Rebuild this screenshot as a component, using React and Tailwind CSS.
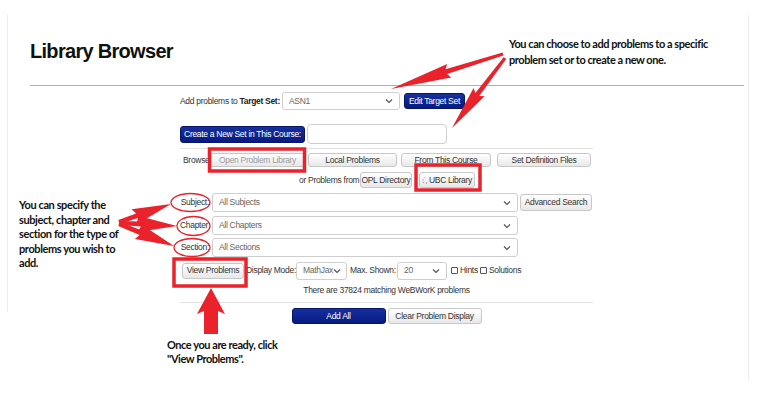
import React from 'react';

const RED = '#e9222b';

// polygon for a tapered annotation arrow, tail -> tip
function arrowPoints(x0, y0, x1, y1, headLen, headW, tailW, neckW) {
  const dx = x1 - x0;
  const dy = y1 - y0;
  const len = Math.hypot(dx, dy);
  const ux = dx / len;
  const uy = dy / len;
  const px = -uy;
  const py = ux;
  const bx = x1 - ux * headLen;
  const by = y1 - uy * headLen;
  const pts = [
    [x0 + px * tailW, y0 + py * tailW],
    [bx + px * neckW, by + py * neckW],
    [bx - ux * 3 + px * headW, by - uy * 3 + py * headW],
    [x1, y1],
    [bx - ux * 3 - px * headW, by - uy * 3 - py * headW],
    [bx - px * neckW, by - py * neckW],
    [x0 - px * tailW, y0 - py * tailW],
  ];
  return pts.map((p) => p.map((v) => v.toFixed(1)).join(',')).join(' ');
}

const arrows = [
  { from: [503, 54], to: [391, 89], head: 58, w: 7, tail: 1.5, neck: 2.5 },
  { from: [505, 58], to: [452, 128], head: 42, w: 7, tail: 1.5, neck: 2.5 },
  { from: [119, 222], to: [171, 204], head: 36, w: 8, tail: 2, neck: 2.5 },
  { from: [119, 223], to: [177, 226], head: 36, w: 8, tail: 2, neck: 2.5 },
  { from: [119, 224], to: [174, 246], head: 36, w: 8, tail: 2, neck: 2.5 },
  { from: [211, 334], to: [211, 288], head: 23, w: 14, tail: 7, neck: 7 },
];

function Chevron() {
  return (
    <svg width="8" height="6" viewBox="0 0 8 6" className="shrink-0">
      <path d="M1 1.5 L4 4.5 L7 1.5" fill="none" stroke="#555" strokeWidth="1.2" />
    </svg>
  );
}

function Select({ value, className }) {
  return (
    <div className={`flex items-center justify-between rounded-[3px] border border-[#cfcfcf] bg-white pl-[6px] pr-[6px] text-[#666] ${className}`}>
      <span>{value}</span>
      <Chevron />
    </div>
  );
}

function Btn({ children, className = '', muted }) {
  return (
    <div className={`flex items-center justify-center whitespace-nowrap rounded-[3px] border border-[#c8c8c8] bg-gradient-to-b from-white to-[#e8e8e8] ${muted ? 'text-[#9a9a9a]' : 'text-[#333]'} ${className}`}>
      {children}
    </div>
  );
}

function NavyBtn({ children, className = '' }) {
  return (
    <div className={`flex items-center justify-center whitespace-nowrap rounded-[3px] border border-[#061568] bg-gradient-to-b from-[#16309e] to-[#071a80] text-white ${className}`}>
      {children}
    </div>
  );
}

function Check() {
  return <span className="inline-block h-[7px] w-[7px] rounded-[1px] border border-[#555] bg-white" />;
}

export default function App() {
  return (
    <div className="relative h-[396px] w-[768px] overflow-hidden bg-white">
      {/* faint panel edges from the original page */}
      <div className="absolute left-[7px] top-[15px] h-[297px] w-px bg-[#ececec]" />
      <div className="absolute left-[748px] top-[15px] h-[365px] w-px bg-[#ececec]" />

      <div className="pl-[30px] pr-[24px] pt-[39px]">
        <h1 className="h-[24px] font-['Liberation_Sans',Arial,sans-serif] text-[20px] font-bold leading-[24px] tracking-[-0.7px] text-[#111]">
          Library Browser
        </h1>
        <div className="mt-[22px] h-px bg-[#b0b0b0]" />

        {/* form */}
        <div className="ml-[150px] w-[413px] whitespace-nowrap font-['Liberation_Sans',Arial,sans-serif] text-[8.5px] tracking-[-0.3px] text-[#333]">
          <div className="mt-[6px] flex h-[18px] items-center">
            <span>
              Add problems to <b className="font-bold text-[#222]">Target Set:</b>
            </span>
            <Select value="ASN1" className="ml-[2px] h-[18px] w-[118px]" />
            <NavyBtn className="ml-[4px] h-[16px] w-[61px]">Edit Target Set</NavyBtn>
          </div>

          <div className="mt-[14px] flex h-[20px] items-center">
            <NavyBtn className="h-[17px] w-[125px]">Create a New Set in This Course:</NavyBtn>
            <div className="ml-[2px] h-[20px] w-[140px] rounded-[4px] border border-[#cfcfcf] bg-white" />
          </div>

          <div className="mt-[4px] h-px bg-[#e2e2e2]" />

          <div className="mt-[4px] flex h-[14px] items-center">
            <span className="w-[30px] pl-[3px]">Browse:</span>
            <Btn muted className="h-[14px] w-[95px]">Open Problem Library</Btn>
            <Btn className="ml-[3px] h-[14px] w-[89px]">Local Problems</Btn>
            <Btn className="ml-[4px] h-[14px] w-[90px]">From This Course</Btn>
            <Btn className="ml-[6px] h-[14px] w-[94px]">Set Definition Files</Btn>
          </div>

          <div className="mt-[5px] flex h-[16px] items-center">
            <span className="ml-[119px] w-[61px]">or Problems from</span>
            <Btn className="h-[16px] w-[52px]">OPL Directory</Btn>
            <Btn className="ml-[7px] h-[16px] w-[56px] gap-[1px]">
              <svg width="6" height="8" viewBox="0 0 6 8">
                <circle cx="1.5" cy="6.5" r="0.8" fill="#aaa" />
                <circle cx="1" cy="4" r="0.8" fill="#bbb" />
                <circle cx="2.5" cy="1.5" r="0.8" fill="#ccc" />
                <circle cx="4.5" cy="7" r="0.8" fill="#999" />
              </svg>
              UBC Library
            </Btn>
          </div>

          <div className="mt-[5px] flex h-[19px] items-center">
            <span className="w-[29px] text-right">Subject:</span>
            <Select value="All Subjects" className="ml-[3px] h-[19px] w-[306px]" />
            <Btn className="ml-[2px] h-[17px] w-[72px]">Advanced Search</Btn>
          </div>
          <div className="mt-[4px] flex h-[19px] items-center">
            <span className="w-[29px] text-right">Chapter:</span>
            <Select value="All Chapters" className="ml-[3px] h-[19px] w-[306px]" />
          </div>
          <div className="mt-[3px] flex h-[19px] items-center">
            <span className="w-[29px] text-right">Section:</span>
            <Select value="All Sections" className="ml-[3px] h-[19px] w-[306px]" />
          </div>

          <div className="mt-[4px] flex h-[19px] items-center">
            <Btn className="ml-[2px] h-[16px] w-[62px]">View Problems</Btn>
            <span className="w-[52px] shrink-0 pl-[2px]">Display Mode:</span>
            <Select value="MathJax" className="h-[18px] w-[51px]" />
            <span className="w-[50px] shrink-0 pl-[3px]">Max. Shown:</span>
            <Select value="20" className="h-[18px] w-[50px]" />
            <span className="ml-[4px] flex items-center gap-[2px]">
              <Check />
              Hints
            </span>
            <span className="ml-[2px] flex items-center gap-[2px]">
              <Check />
              Solutions
            </span>
          </div>

          <div className="mt-[4px] h-[12px] text-center leading-[12px]">There are 37824 matching WeBWorK problems</div>

          <div className="mt-[6px] h-px bg-[#e2e2e2]" />

          <div className="mt-[5px] flex h-[16px] items-center justify-center gap-[2px]">
            <NavyBtn className="h-[16px] w-[94px]">Add All</NavyBtn>
            <Btn className="h-[16px] w-[94px]">Clear Problem Display</Btn>
          </div>
        </div>
      </div>

      {/* annotation layer */}
      <div className="absolute left-[509px] top-[36px] font-['Lato',sans-serif] text-[11px] font-bold leading-[16px] tracking-[-0.45px] text-[#111]">
        You can choose to add problems to a specific
        <br />
        problem set or to create a new one.
      </div>
      <div className="absolute left-[19px] top-[198px] font-['Lato',sans-serif] text-[11px] font-bold leading-[14.5px] tracking-[-0.4px] text-[#111]">
        You can specify the
        <br />
        subject, chapter and
        <br />
        section for the type of
        <br />
        problems you wish to
        <br />
        add.
      </div>
      <div className="absolute left-[167px] top-[338px] font-['Lato',sans-serif] text-[11px] font-bold leading-[14px] tracking-[-0.45px] text-[#111]">
        Once you are ready, click
        <br />
        "View Problems".
      </div>

      <svg className="pointer-events-none absolute left-0 top-0" width="768" height="396" viewBox="0 0 768 396">
        {arrows.map((a, i) => (
          <polygon key={i} points={arrowPoints(a.from[0], a.from[1], a.to[0], a.to[1], a.head, a.w, a.tail, a.neck)} fill={RED} />
        ))}
        <rect x="209.5" y="149" width="95" height="22" fill="none" stroke={RED} strokeWidth="3.5" />
        <rect x="416" y="165" width="64" height="25" fill="none" stroke={RED} strokeWidth="3.5" />
        <rect x="174" y="259" width="72" height="27" fill="none" stroke={RED} strokeWidth="3.5" />
        <ellipse cx="190.5" cy="202.5" rx="19.5" ry="9" fill="none" stroke={RED} strokeWidth="1.3" />
        <ellipse cx="193.5" cy="226" rx="16.5" ry="9.5" fill="none" stroke={RED} strokeWidth="1.3" />
        <ellipse cx="192" cy="247.5" rx="18" ry="9" fill="none" stroke={RED} strokeWidth="1.3" />
      </svg>
    </div>
  );
}
